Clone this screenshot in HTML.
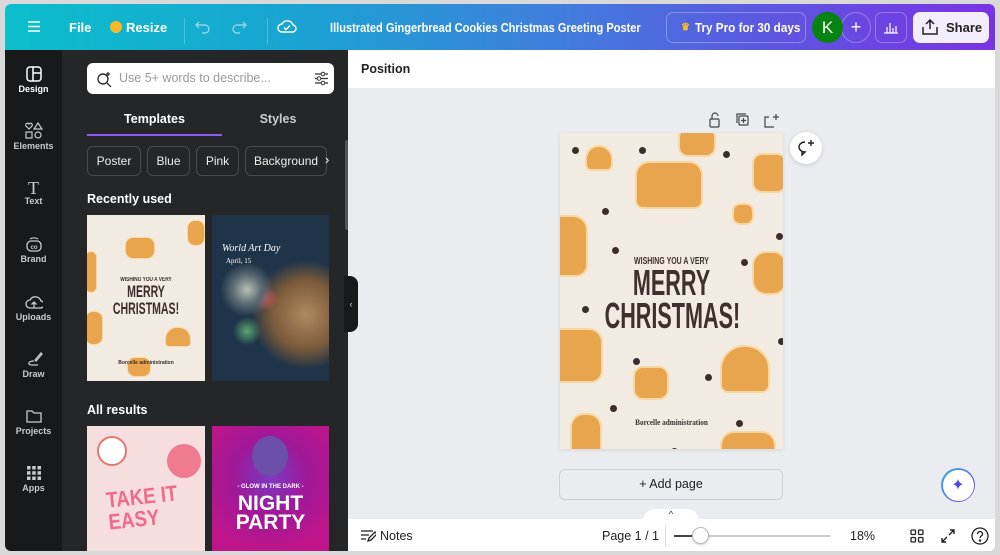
<!DOCTYPE html>
<html><head><meta charset="utf-8"><style>
*{box-sizing:border-box;margin:0;padding:0}
body{width:1000px;height:555px;background:#d9d9d9;font-family:"Liberation Sans",sans-serif;overflow:hidden;position:relative}
#win{position:absolute;left:5px;top:4px;width:990px;height:547px;border-radius:6px;overflow:hidden;background:#ebecf0}
#hdr{position:absolute;left:0;top:0;width:990px;height:46px;background:linear-gradient(90deg,#0bbfcb 0%,#1aa3d2 30%,#3f7fdc 55%,#5a5ae0 75%,#7a32e4 100%);color:#fff;font-weight:bold;font-size:13px}
#hdr .t{position:absolute;top:16px;white-space:nowrap;transform-origin:left center}
.pill{position:absolute;border:1px solid rgba(255,255,255,.3);border-radius:7px}
#rail{position:absolute;left:0;top:46px;width:57px;height:501px;background:#18191b}
.ri{position:absolute;left:0;width:57px;text-align:center;color:#c9cacc;font-size:9px;font-weight:bold}
.ri svg{display:block;margin:0 auto 2px}
#panel{position:absolute;left:57px;top:46px;width:286px;height:501px;background:#252627;color:#fff}
.chip{position:absolute;top:96px;height:30px;border:1px solid #4a4b4e;border-radius:6px;font-size:12px;line-height:28px;text-align:center;color:#eee;white-space:nowrap;overflow:hidden}
#top2{position:absolute;left:343px;top:46px;width:647px;height:38px;background:#fff;font-size:12.5px;font-weight:bold;color:#222}
#bot{position:absolute;left:343px;top:515px;width:647px;height:32px;background:#fff;font-size:12.5px;color:#222}
.dot{position:absolute;width:7px;height:7px;border-radius:50%;background:#3b2d2a}
.ck{position:absolute;background:#e8a54d;border:2px solid #f7d8a5;border-radius:8px}
.nar{font-family:'Liberation Sans Narrow','Liberation Sans',sans-serif;font-weight:bold}
</style></head><body>
<div id="win">
<div id="hdr">
 <svg style="position:absolute;left:22px;top:16px" width="14" height="13"><path d="M1 2h12M1 6.5h12M1 11h12" stroke="#fff" stroke-width="1.6"/></svg>
 <div class="t" style="left:64px">File</div>
 <div style="position:absolute;left:105px;top:17px;width:12px;height:12px;border-radius:50%;background:#f7b928"></div>
 <div class="t" style="left:121px">Resize</div>
 <div style="position:absolute;left:179px;top:14px;width:1px;height:26px;background:rgba(255,255,255,.25)"></div>
 <svg style="position:absolute;left:190px;top:16px" width="16" height="14"><path d="M4 2L1 5l3 3M1 5h9a4 4 0 010 8H7" fill="none" stroke="rgba(255,255,255,.5)" stroke-width="1.4"/></svg>
 <svg style="position:absolute;left:226px;top:16px" width="16" height="14"><path d="M12 2l3 3-3 3M15 5H6a4 4 0 000 8h3" fill="none" stroke="rgba(255,255,255,.5)" stroke-width="1.4"/></svg>
 <div style="position:absolute;left:262px;top:14px;width:1px;height:26px;background:rgba(255,255,255,.25)"></div>
 <svg style="position:absolute;left:272px;top:14px" width="20" height="16"><path d="M5 14a4 4 0 010-8 6 6 0 0111 1 3.5 3.5 0 01-1 7z" fill="none" stroke="#fff" stroke-width="1.4"/><path d="M7 9.5l2 2 4-4" fill="none" stroke="#fff" stroke-width="1.4"/></svg>
 <div class="t" style="left:325px;transform:scaleX(.85)">Illustrated Gingerbread Cookies Christmas Greeting Poster</div>
 <div class="pill" style="left:661px;top:8px;width:140px;height:31px"></div>
 <div style="position:absolute;left:676px;top:18px;color:#f7b928;font-size:10px">♛</div>
 <div class="t" style="left:690px;transform:scaleX(.9)">Try Pro for 30 days</div>
 <div style="position:absolute;left:807px;top:8px;width:31px;height:31px;border-radius:50%;background:#078311;font-size:17px;line-height:31px;text-align:center;font-weight:normal;z-index:2">K</div>
 <div style="position:absolute;left:836px;top:8px;width:30px;height:31px;border-radius:50%;border:1px solid rgba(255,255,255,.3);text-align:center;line-height:28px;font-size:18px;font-weight:normal">+</div>
 <div class="pill" style="left:870px;top:8px;width:32px;height:31px"></div>
 <svg style="position:absolute;left:878px;top:16px" width="16" height="14"><path d="M1 13h14M4 13V7M7 13V3M10 13V8M13 13V6" stroke="#fff" stroke-width="1.2"/></svg>
 <div style="position:absolute;left:908px;top:8px;width:76px;height:31px;border-radius:7px;background:#f3eefe;color:#222;font-size:13px;line-height:31px;padding-left:33px">Share</div>
 <svg style="position:absolute;left:917px;top:15px" width="16" height="16"><path d="M8 10V1M4 5l4-4 4 4M1 8v7h14V8" fill="none" stroke="#222" stroke-width="1.5"/></svg>
</div>

<div id="rail">
 <div class="ri" style="top:16px;color:#fff"><svg width="16" height="16"><rect x="1" y="1" width="14" height="14" rx="3" fill="none" stroke="#fff" stroke-width="1.5"/><path d="M7 1v14M7 7h8" stroke="#fff" stroke-width="1.5"/></svg>Design</div>
 <div class="ri" style="top:72px"><svg width="18" height="17"><path d="M4 7L1 4a1.6 1.6 0 013-2 1.6 1.6 0 013 2z" fill="none" stroke="#c9cacc" stroke-width="1.2"/><path d="M13 1l4 6h-8z" fill="none" stroke="#c9cacc" stroke-width="1.2"/><rect x="1" y="10" width="6" height="6" fill="none" stroke="#c9cacc" stroke-width="1.2"/><circle cx="13" cy="13" r="3" fill="none" stroke="#c9cacc" stroke-width="1.2"/></svg>Elements</div>
 <div class="ri" style="top:130px"><div style="font-family:'Liberation Serif',serif;font-size:18px;font-weight:normal;line-height:16px">T</div>Text</div>
 <div class="ri" style="top:186px"><svg width="16" height="16"><rect x="1" y="5" width="14" height="10" rx="4" fill="none" stroke="#c9cacc" stroke-width="1.3"/><path d="M4 3a5 3 0 018 0" fill="none" stroke="#c9cacc" stroke-width="1.2"/><text x="8" y="13" font-size="6" text-anchor="middle" fill="#c9cacc" font-family="Liberation Sans">co</text></svg>Brand</div>
 <div class="ri" style="top:244px"><svg width="18" height="16"><path d="M5 14a4 4 0 010-8 6 6 0 0111 1 3.5 3.5 0 01-1 7z" fill="none" stroke="#c9cacc" stroke-width="1.3"/><path d="M9 14V8M6.5 10.5L9 8l2.5 2.5" fill="none" stroke="#c9cacc" stroke-width="1.3"/></svg>Uploads</div>
 <div class="ri" style="top:301px"><svg width="18" height="16"><path d="M10 9l6-7 1 1-6 7zM9 10c-6 0-7 4-2 4h6" fill="none" stroke="#c9cacc" stroke-width="1.3"/></svg>Draw</div>
 <div class="ri" style="top:358px"><svg width="16" height="16"><path d="M1 3h5l2 2h7v9H1z" fill="none" stroke="#c9cacc" stroke-width="1.3"/></svg>Projects</div>
 <div class="ri" style="top:415px"><svg width="16" height="16" fill="#c9cacc"><rect x="1" y="1" width="3.5" height="3.5"/><rect x="6.2" y="1" width="3.5" height="3.5"/><rect x="11.5" y="1" width="3.5" height="3.5"/><rect x="1" y="6.2" width="3.5" height="3.5"/><rect x="6.2" y="6.2" width="3.5" height="3.5"/><rect x="11.5" y="6.2" width="3.5" height="3.5"/><rect x="1" y="11.5" width="3.5" height="3.5"/><rect x="6.2" y="11.5" width="3.5" height="3.5"/><rect x="11.5" y="11.5" width="3.5" height="3.5"/></svg>Apps</div>
</div>

<div id="panel">
 <div style="position:absolute;left:25px;top:13px;width:247px;height:31px;background:#fff;border-radius:6px;color:#9a9a9a;font-size:12.5px;line-height:31px;padding-left:32px">Use 5+ words to describe...</div>
 <svg style="position:absolute;left:34px;top:21px" width="16" height="16"><circle cx="7" cy="8" r="5" fill="none" stroke="#333" stroke-width="1.4"/><path d="M11 12l4 4M12 1v4M10 3h4" stroke="#333" stroke-width="1.3"/></svg>
 <svg style="position:absolute;left:252px;top:21px" width="15" height="15"><path d="M1 3h13M1 7.5h13M1 12h13" stroke="#333" stroke-width="1.2"/><circle cx="9" cy="3" r="1.8" fill="#fff" stroke="#333"/><circle cx="5" cy="7.5" r="1.8" fill="#fff" stroke="#333"/><circle cx="9" cy="12" r="1.8" fill="#fff" stroke="#333"/></svg>
 <div style="position:absolute;left:25px;top:62px;width:135px;text-align:center;font-size:12.5px;font-weight:bold">Templates</div>
 <div style="position:absolute;left:25px;top:84px;width:135px;height:2px;background:#8b5cf6"></div>
 <div style="position:absolute;left:160px;top:62px;width:112px;text-align:center;font-size:12.5px;font-weight:bold;color:#ccc">Styles</div>
 <div class="chip" style="left:25px;width:54px">Poster</div>
 <div class="chip" style="left:85px;width:43px">Blue</div>
 <div class="chip" style="left:134px;width:43px">Pink</div>
 <div class="chip" style="left:183px;width:82px;text-align:left;padding-left:8px">Background</div>
 <div style="position:absolute;left:263px;top:102px;font-size:13px">›</div>
 <div style="position:absolute;left:25px;top:142px;font-size:12.5px;font-weight:bold">Recently used</div>
 <div style="position:absolute;left:25px;top:165px;width:118px;height:166px;background:#f1ebe2;overflow:hidden">
  <div class="ck" style="left:38px;top:22px;width:30px;height:22px;border-width:1px"></div>
  <div class="ck" style="left:78px;top:112px;width:26px;height:20px;border-width:1px;border-radius:12px 12px 4px 4px"></div>
  <div class="ck" style="left:-2px;top:36px;width:12px;height:42px;border-width:1px"></div>
  <div class="ck" style="left:-2px;top:96px;width:18px;height:34px;border-width:1px"></div>
  <div class="ck" style="left:100px;top:5px;width:18px;height:26px;border-width:1px"></div>
  <div class="ck" style="left:40px;top:142px;width:24px;height:20px;border-width:1px"></div>
  <div style="position:absolute;left:0;top:62px;width:118px;text-align:center;color:#3b2d2a;line-height:1" class="nar">
   <div style="font-size:6px;transform:scaleX(.8)">WISHING YOU A VERY</div><div style="font-size:17px;transform:scaleX(.62)">MERRY</div><div style="font-size:17px;transform:scaleX(.62)">CHRISTMAS!</div></div>
  <div style="position:absolute;left:0;top:145px;width:118px;text-align:center;font-size:5px;color:#3b2d2a;font-weight:bold">Borcelle administration</div>
 </div>
 <div style="position:absolute;left:150px;top:165px;width:117px;height:166px;background:radial-gradient(circle at 30% 45%,#b5c0b0 0,#5a6a74 12%,transparent 22%),radial-gradient(circle at 45% 50%,#e85050 0,transparent 12%),radial-gradient(circle at 30% 70%,#5aa870 0,transparent 10%),radial-gradient(circle at 80% 60%,#b08a60 0,#7a5a3a 25%,transparent 40%),#1f3448;overflow:hidden">
  <div style="position:absolute;left:10px;top:28px;font-family:'Liberation Serif',serif;font-style:italic;font-size:10px;color:#fff">World Art Day</div>
  <div style="position:absolute;left:14px;top:42px;font-family:'Liberation Serif',serif;font-size:7px;color:#fff">April, 15</div>
 </div>
 <div style="position:absolute;left:25px;top:353px;font-size:12.5px;font-weight:bold">All results</div>
 <div style="position:absolute;left:25px;top:376px;width:118px;height:125px;background:#f7dede;overflow:hidden">
  <div style="position:absolute;left:14px;top:60px;font-size:22px;font-weight:bold;color:#f06a8a;line-height:22px;transform:rotate(-6deg) scaleX(.85)">TAKE IT<br>EASY</div>
  <div style="position:absolute;left:10px;top:10px;width:30px;height:30px;border-radius:50%;background:#fff;border:2px solid #e07a70"></div>
  <div style="position:absolute;left:80px;top:18px;width:34px;height:34px;border-radius:50%;background:#f07a90"></div>
 </div>
 <div style="position:absolute;left:150px;top:376px;width:117px;height:125px;background:radial-gradient(circle at 50% 40%,#7a3ac0 0,#a01898 40%,#c0158a 80%);overflow:hidden;color:#fff;text-align:center">
  <div style="position:absolute;left:40px;top:10px;width:36px;height:40px;border-radius:50%;background:#6b4fa8"></div>
  <div style="position:absolute;left:0;top:58px;width:117px;font-size:6px;font-weight:bold">- GLOW IN THE DARK -</div>
  <div style="position:absolute;left:0;top:68px;width:117px;font-size:21px;font-weight:bold;line-height:19px">NIGHT<br>PARTY</div>
 </div>
 <div style="position:absolute;left:283px;top:90px;width:3px;height:90px;background:#555;border-radius:2px"></div>
</div>
<div style="position:absolute;left:339px;top:272px;width:14px;height:56px;background:#18191b;border-radius:0 8px 8px 0;color:#ccc;font-size:9px;line-height:56px;text-align:center">‹</div>

<div id="top2"><div style="position:absolute;left:13px;top:12px">Position</div></div>

<svg style="position:absolute;left:703px;top:108px" width="75" height="16" fill="none" stroke="#444" stroke-width="1.2"><rect x="2" y="7" width="9" height="8" rx="1"/><path d="M4 7V4a3 3 0 016 0"/><rect x="31" y="4" width="9" height="9" rx="1"/><path d="M29 11V2h9M35.5 6v5M33 8.5h5"/><path d="M68 2v6M65 5h6M66 15h-9V5h4"/></svg>

<div style="position:absolute;left:555px;top:129px;width:223px;height:316px;background:#f1ebe2;overflow:hidden;box-shadow:0 1px 4px rgba(0,0,0,.1)">
 <div class="dot" style="left:12px;top:14px"></div><div class="dot" style="left:79px;top:14px"></div><div class="dot" style="left:163px;top:18px"></div>
 <div class="dot" style="left:42px;top:75px"></div><div class="dot" style="left:52px;top:114px"></div><div class="dot" style="left:216px;top:100px"></div>
 <div class="dot" style="left:181px;top:126px"></div><div class="dot" style="left:22px;top:173px"></div><div class="dot" style="left:218px;top:205px"></div>
 <div class="dot" style="left:73px;top:225px"></div><div class="dot" style="left:145px;top:241px"></div><div class="dot" style="left:50px;top:272px"></div>
 <div class="dot" style="left:176px;top:287px"></div><div class="dot" style="left:111px;top:315px"></div>
 <div class="ck" style="left:75px;top:28px;width:68px;height:48px;border-radius:14px 14px 8px 8px"></div>
 <div class="ck" style="left:25px;top:12px;width:28px;height:26px;border-radius:14px 14px 6px 6px"></div>
 <div class="ck" style="left:118px;top:-6px;width:38px;height:30px;border-radius:10px"></div>
 <div class="ck" style="left:192px;top:20px;width:35px;height:40px;border-radius:10px"></div>
 <div class="ck" style="left:172px;top:70px;width:22px;height:22px"></div>
 <div class="ck" style="left:-2px;top:82px;width:30px;height:62px;border-radius:0 15px 12px 0"></div>
 <div class="ck" style="left:192px;top:118px;width:35px;height:44px;border-radius:14px"></div>
 <div class="ck" style="left:-2px;top:195px;width:45px;height:55px;border-radius:0 14px 12px 0"></div>
 <div class="ck" style="left:160px;top:212px;width:50px;height:48px;border-radius:24px 24px 8px 8px"></div>
 <div class="ck" style="left:73px;top:233px;width:36px;height:34px;border-radius:10px"></div>
 <div class="ck" style="left:10px;top:280px;width:32px;height:40px;border-radius:14px 14px 0 0"></div>
 <div class="ck" style="left:160px;top:298px;width:56px;height:30px;border-radius:14px 14px 0 0"></div>
 <div style="position:absolute;left:0;top:124px;width:223px;text-align:center;color:#3d302d;line-height:1" class="nar">
  <div style="font-size:10px;transform:scaleX(.7)">WISHING YOU A VERY</div>
  <div style="font-size:36px;line-height:32px;transform:scaleX(.6)">MERRY</div>
  <div style="font-size:36px;line-height:34px;transform:scaleX(.6)">CHRISTMAS!</div>
 </div>
 <div style="position:absolute;left:0;top:284px;width:223px;text-align:center;font-family:'Liberation Serif',serif;font-size:8.5px;font-weight:bold;color:#3d302d;transform:scaleX(.85)">Borcelle administration</div>
</div>

<div style="position:absolute;left:785px;top:128px;width:32px;height:32px;border-radius:50%;background:#fff;box-shadow:0 1px 4px rgba(0,0,0,.15)"></div>
<svg style="position:absolute;left:791px;top:134px" width="20" height="20" fill="none" stroke="#222" stroke-width="1.4"><path d="M9 4a6 5 0 100 10l-3 3v-4"/><path d="M15 2v6M12 5h6"/></svg>

<div style="position:absolute;left:554px;top:465px;width:224px;height:31px;border:1px solid #cfd0d4;border-radius:6px;text-align:center;line-height:29px;font-size:12.5px;color:#222">+ Add page</div>

<div style="position:absolute;left:936px;top:464px;width:34px;height:34px;border-radius:50%;background:linear-gradient(135deg,#3ab3e0,#7b3ae8);padding:1.5px"><div style="width:100%;height:100%;border-radius:50%;background:#fff;text-align:center;line-height:31px;color:#4a4ee0;font-size:16px">✦</div></div>

<div style="position:absolute;left:638px;top:505px;width:56px;height:14px;border-radius:12px 12px 0 0;background:#fff;text-align:center;font-size:9px;color:#333">^</div>
<div id="bot">
 <svg style="position:absolute;left:12px;top:10px" width="16" height="13" fill="none" stroke="#222" stroke-width="1.3"><path d="M1 2h12M1 6h8M1 10h5M8 12l1-3 6-6 2 2-6 6z"/></svg>
 <div style="position:absolute;left:32px;top:10px">Notes</div>
 <div style="position:absolute;left:254px;top:10px">Page 1 / 1</div>
 <div style="position:absolute;left:317px;top:6px;width:1px;height:22px;background:#ddd"></div>
 <div style="position:absolute;left:326px;top:16px;width:156px;height:2px;background:#ccc"></div>
 <div style="position:absolute;left:326px;top:16px;width:25px;height:2px;background:#444"></div>
 <div style="position:absolute;left:344px;top:8px;width:17px;height:17px;border-radius:50%;background:#fff;border:1px solid #bbb;box-shadow:0 1px 2px rgba(0,0,0,.2)"></div>
 <div style="position:absolute;left:502px;top:10px">18%</div>
 <svg style="position:absolute;left:562px;top:10px" width="14" height="14" fill="none" stroke="#222" stroke-width="1.3"><rect x="1" y="1" width="4.5" height="4.5" rx="1"/><rect x="8.5" y="1" width="4.5" height="4.5" rx="1"/><rect x="1" y="8.5" width="4.5" height="4.5" rx="1"/><rect x="8.5" y="8.5" width="4.5" height="4.5" rx="1"/></svg>
 <svg style="position:absolute;left:593px;top:10px" width="14" height="14" fill="none" stroke="#222" stroke-width="1.4"><path d="M8 6l5-5M9 1h4v4M6 8l-5 5M1 9v4h4"/></svg>
 <svg style="position:absolute;left:623px;top:8px" width="18" height="18" fill="none" stroke="#222" stroke-width="1.3"><circle cx="9" cy="9" r="8"/><path d="M6.5 7a2.5 2.5 0 115 0c0 2-2.5 2-2.5 4"/><circle cx="9" cy="13.5" r=".6" fill="#222"/></svg>
</div>
</div>
</body></html>
